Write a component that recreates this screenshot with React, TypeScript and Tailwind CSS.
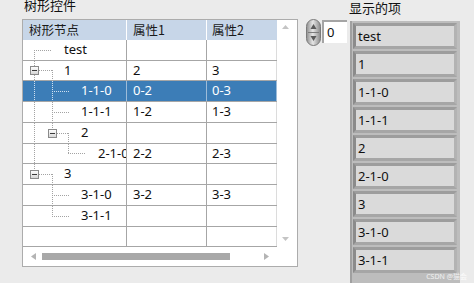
import React from "react";

type VMode = "full" | "top" | "bottom";
type Row = {
  h: number;
  label: string;
  c2: string;
  c3: string;
  level: number;
  v: Record<number, VMode>;
  box?: number;
  sel?: boolean;
  empty?: boolean;
};

const X = [11, 29, 45];
const HEND = [29, 46, 62];
const TX = ["pl-[41px]", "pl-[58px]", "pl-[75px]"];

const rows: Row[] = [
  { h: 21, label: "test", c2: "", c3: "", level: 0, v: { 0: "bottom" } },
  { h: 20, label: "1", c2: "2", c3: "3", level: 0, v: { 0: "full", 1: "bottom" }, box: 0 },
  { h: 21, label: "1-1-0", c2: "0-2", c3: "0-3", level: 1, v: { 0: "full", 1: "full" }, sel: true },
  { h: 21, label: "1-1-1", c2: "1-2", c3: "1-3", level: 1, v: { 0: "full", 1: "full" } },
  { h: 21, label: "2", c2: "", c3: "", level: 1, v: { 0: "full", 1: "top", 2: "bottom" }, box: 1 },
  { h: 20, label: "2-1-0", c2: "2-2", c3: "2-3", level: 2, v: { 0: "full", 2: "top" } },
  { h: 21, label: "3", c2: "", c3: "", level: 0, v: { 0: "top", 1: "bottom" }, box: 0 },
  { h: 21, label: "3-1-0", c2: "3-2", c3: "3-3", level: 1, v: { 1: "full" } },
  { h: 21, label: "3-1-1", c2: "", c3: "", level: 1, v: { 1: "top" } },
  { h: 20, label: "", c2: "", c3: "", level: 0, v: {}, empty: true },
];

const items = ["test", "1", "1-1-0", "1-1-1", "2", "2-1-0", "3", "3-1-0", "3-1-1"];

function TreeLines({ r }: { r: Row }) {
  const H = r.h - 1;
  const m = Math.floor(H / 2);
  const col = r.sel ? "#cfe0f0" : "#a3a3a3";
  const els: React.ReactNode[] = [];
  Object.entries(r.v).forEach(([k, mode]) => {
    const x = X[Number(k)] + 0.5;
    const y1 = mode === "bottom" ? m : 0;
    const y2 = mode === "top" ? m + 1 : H;
    els.push(
      <line key={"v" + k} x1={x} x2={x} y1={y1} y2={y2} stroke={col} strokeDasharray="1 1" />
    );
  });
  if (!r.empty) {
    const start = r.box !== undefined ? X[r.level] + 5 : X[r.level];
    els.push(
      <line key="h" x1={start} x2={HEND[r.level]} y1={m + 0.5} y2={m + 0.5} stroke={col} strokeDasharray="1 1" />
    );
  }
  if (r.box !== undefined) {
    const bx = X[r.box];
    els.push(
      <g key="b">
        <rect x={bx - 4 + 0.5} y={m - 4 + 0.5} width={8} height={8} rx={1} fill="url(#bx)" stroke="#8a8a8a" />
        <line x1={bx - 2} x2={bx + 3} y1={m + 0.5} y2={m + 0.5} stroke="#3a3a3a" />
      </g>
    );
  }
  return (
    <svg className="absolute left-0 top-0" width={104} height={H} shapeRendering="crispEdges">
      <defs>
        <linearGradient id="bx" x1="0" y1="0" x2="0" y2="1">
          <stop offset="0" stopColor="#ffffff" />
          <stop offset="1" stopColor="#d4d4d4" />
        </linearGradient>
      </defs>
      {els}
    </svg>
  );
}

export default function App() {
  return (
    <div className="relative w-[474px] h-[283px] overflow-hidden bg-[#ebebeb] flex font-['Noto_Sans','Noto_Sans_CJK_SC',sans-serif] text-[13px] text-[#111]">
      {/* Tree control */}
      <div className="pl-[22px] flex flex-col">
        <div className="h-[19px] pl-[2px]">
          <div className="-mt-[2px] leading-[13px] font-['Noto_Sans_CJK_SC',sans-serif]">树形控件</div>
        </div>
        <div className="w-[276px] h-[248px] border border-[#acacac] bg-white flex flex-col">
          <div className="flex h-[227px]">
            <div className="w-[254px] flex flex-col">
              {/* header */}
              <div className="flex h-[20px] bg-[#c7d6e8] font-['Noto_Sans_CJK_SC',sans-serif] text-[12.5px] text-[#1a1a1a]">
                <div className="w-[104px] border-r border-white flex items-center pl-[6px]">树形节点</div>
                <div className="w-[80px] border-r border-white flex items-center pl-[6px]">属性1</div>
                <div className="w-[70px] flex items-center pl-[5px]">属性2</div>
              </div>
              {rows.map((r, i) => (
                <div
                  key={i}
                  style={{ height: r.h }}
                  className={
                    "flex border-b " +
                    (r.sel ? "bg-[#3c7db7] text-white border-[#a6a6a6]" : "border-[#a6a6a6]")
                  }
                >
                  <div
                    className={
                      "relative w-[104px] border-r overflow-hidden whitespace-nowrap flex items-center " +
                      TX[r.level] +
                      (r.sel ? " border-[#9dbcd9]" : " border-[#a6a6a6]")
                    }
                  >
                    <TreeLines r={r} />
                    <span className="relative">{r.label}</span>
                  </div>
                  <div
                    className={
                      "w-[80px] border-r flex items-center pl-[6px] whitespace-nowrap overflow-hidden" +
                      (r.sel ? " border-[#9dbcd9]" : " border-[#a6a6a6]")
                    }
                  >
                    {r.c2}
                  </div>
                  <div
                    className={
                      "w-[70px] border-r flex items-center pl-[5px] whitespace-nowrap overflow-hidden" +
                      (r.sel ? " border-[#9dbcd9]" : " border-[#dcdcdc]")
                    }
                  >
                    {r.c3}
                  </div>
                </div>
              ))}
            </div>
            {/* vertical scrollbar */}
            <div className="w-[20px] flex flex-col justify-between items-start pl-[5px] pt-[5px] pb-[6px]">
              <svg width="7" height="4" viewBox="0 0 7 4">
                <path d="M3.5 0 L7 4 L0 4 Z" fill="#c4c4c4" />
              </svg>
              <svg width="7" height="4" viewBox="0 0 7 4">
                <path d="M0 0 L7 0 L3.5 4 Z" fill="#c4c4c4" />
              </svg>
            </div>
          </div>
          {/* horizontal scrollbar */}
          <div className="h-[19px] flex items-center pl-[8px]">
            <svg width="5" height="7" viewBox="0 0 5 7">
              <path d="M5 0 L5 7 L0 3.5 Z" fill="#b4b4b4" />
            </svg>
            <div className="ml-[6px] w-[188px] h-[7px] bg-[#a8a8a8]" />
            <svg className="ml-[34px]" width="5" height="7" viewBox="0 0 5 7">
              <path d="M0 0 L0 7 L5 3.5 Z" fill="#b4b4b4" />
            </svg>
          </div>
        </div>
      </div>

      {/* Numeric index control */}
      <div className="ml-[8px] pt-[19px] flex items-start">
        <svg width="15" height="27" viewBox="0 0 15 27">
          <defs>
            <linearGradient id="sg" x1="0" y1="0" x2="1" y2="0">
              <stop offset="0" stopColor="#8e8e8e" />
              <stop offset="0.45" stopColor="#e6e6e6" />
              <stop offset="1" stopColor="#8a8a8a" />
            </linearGradient>
          </defs>
          <rect x="0.5" y="0.5" width="14" height="26" rx="7" fill="url(#sg)" stroke="#7a7a7a" />
          <line x1="2" y1="13.5" x2="13" y2="13.5" stroke="#7c7c7c" />
          <path d="M7.5 5 L10.5 10 L4.5 10 Z" fill="#5a5a5a" />
          <path d="M7.5 22 L10.5 17 L4.5 17 Z" fill="#5a5a5a" />
        </svg>
        <div className="ml-[1px] mt-[1px] w-[25px] h-[23px] bg-white border-l-2 border-t-2 border-[#a4a4a4] flex items-center pl-[3px] leading-none">
          0
        </div>
      </div>

      {/* Array of strings */}
      <div className="ml-[2px] flex flex-col">
        <div className="h-[21px] leading-[16px] font-['Noto_Sans_CJK_SC',sans-serif]">显示的项</div>
        <div className="ml-[1px] w-[110px] h-[262px] bg-[#bdbdbd] border-l-2 border-[#a0a0a0] pl-[1px] pt-[2px] flex flex-col gap-[2px]">
          {items.map((t) => (
            <div
              key={t}
              className="shrink-0 w-[104px] h-[26px] border-[3px] border-t-[#9d9d9d] border-l-[#8b8b8b] border-r-[#b3b3b3] border-b-[#a6a6a6] bg-[#dadada] flex items-center pl-[2px] leading-none"
            >
              {t}
            </div>
          ))}
        </div>
      </div>

      <div className="absolute right-[7px] bottom-[3px] text-[7px] leading-none text-white/80 font-['Noto_Sans','Noto_Sans_CJK_SC',sans-serif]">
        CSDN @猫会
      </div>
    </div>
  );
}
